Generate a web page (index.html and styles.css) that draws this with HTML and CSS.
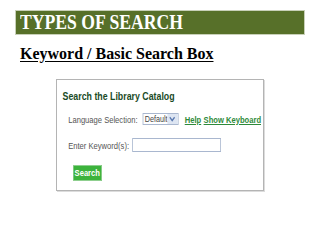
FILE: index.html
```html
<!DOCTYPE html>
<html>
<head>
<meta charset="utf-8">
<link rel="stylesheet" href="styles.css">
</head>
<body>
<div class="slide">
  <div class="bar"><span class="bar-text">TYPES OF SEARCH</span></div>
  <div class="subtitle">Keyword / Basic Search Box</div>
  <div class="panel">
    <div class="inner">
      <div class="ptitle">Search the Library Catalog</div>
      <div class="row lang">
        <span class="label">Language Selection:</span>
        <span class="select"><span class="sel-text">Default</span><span class="arrow"><svg width="8" height="6" viewBox="0 0 8 6"><path d="M1 1.2 L4 4.5 L7 1.2" fill="none" stroke="#5a79b0" stroke-width="1.6"/></svg></span></span>
        <a class="link help">Help</a>
        <a class="link">Show Keyboard</a>
      </div>
      <div class="row kw">
        <span class="label">Enter Keyword(s):</span>
        <span class="input"></span>
      </div>
      <div class="row btnrow">
        <span class="btn">Search</span>
      </div>
    </div>
  </div>
</div>
</body>
</html>
```
FILE: styles.css
```css
html, body {
  margin: 0;
  padding: 0;
  background: #ffffff;
}
.slide {
  width: 320px;
  height: 240px;
  display: flex;
  flex-direction: column;
  overflow: hidden;
}
.bar {
  margin: 11px 16px 0 16px;
  height: 23px;
  background: #577029;
  color: #ffffff;
  font-family: "Liberation Serif", serif;
  font-weight: bold;
  line-height: 23px;
  padding-left: 4px;
  box-shadow: 0 0 0 1px #c8d0b8;
  white-space: nowrap;
}
.bar-text {
  display: inline-block;
  font-size: 21px;
  transform: scaleX(0.84);
  transform-origin: left center;
}
.subtitle {
  margin: 11px 0 0 20px;
  font-family: "Liberation Serif", serif;
  font-weight: bold;
  font-size: 16px;
  line-height: 18px;
  color: #000000;
  text-decoration: underline;
  text-underline-offset: 2px;
}
.panel {
  margin: 16px 0 0 56px;
  width: 206px;
  height: 110px;
  border: 1px solid #b4b4b4;
  box-shadow: 1px 1px 0 #dcdcdc;
  font-family: "Liberation Sans", Arial, sans-serif;
  white-space: nowrap;
}
.inner {
  width: 257px;
  margin-right: -51px;
  display: flex;
  flex-direction: column;
  transform: scaleX(0.8);
  transform-origin: left top;
}
.ptitle {
  margin: 10px 0 0 7px;
  font-weight: bold;
  font-size: 11px;
  line-height: 13px;
  color: #1a4a26;
}
.row {
  display: flex;
  align-items: center;
  margin-left: 14px;
}
.row > * {
  flex-shrink: 0;
}
.lang {
  margin-top: 10px;
  height: 12px;
}
.label {
  font-size: 9.5px;
  color: #555555;
}
.select {
  margin-left: 6px;
  width: 43px;
  height: 10px;
  border: 1px solid #a9b7cf;
  display: flex;
  align-items: center;
  justify-content: space-between;
  background: #fff;
}
.sel-text {
  font-size: 9px;
  color: #444;
  padding-left: 2px;
}
.arrow {
  width: 14px;
  height: 10px;
  background: #dde5f2;
  display: flex;
  align-items: center;
  justify-content: center;
}
.link {
  font-size: 9.5px;
  font-weight: bold;
  color: #2e8a3a;
  text-decoration: underline;
}
.help {
  margin-left: 8px;
  margin-right: 3px;
}
.kw {
  margin-top: 13px;
  height: 14px;
}
.input {
  margin-left: 4px;
  width: 109px;
  height: 12px;
  border: 1px solid #a9b7cf;
  background: #fff;
}
.btnrow {
  margin-top: 13px;
  margin-left: 20px;
}
.btn {
  background: #3cb33c;
  color: #ffffff;
  font-size: 9.5px;
  font-weight: bold;
  padding: 1px 1px;
  border: 1px solid #8fcf8f;
  line-height: 12px;
}
```
